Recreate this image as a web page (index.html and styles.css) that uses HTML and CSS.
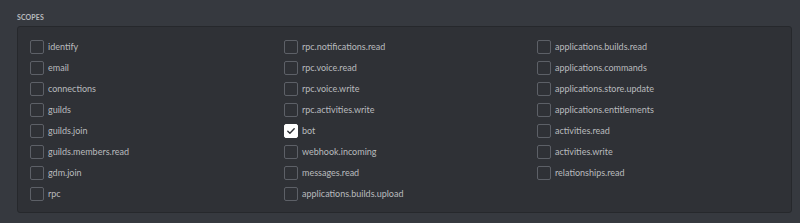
FILE: index.html
```html
<!DOCTYPE html>
<html>
<head>
<meta charset="utf-8">
<link rel="stylesheet" href="styles.css">
</head>
<body>
<div class="page">
  <div class="heading">Scopes</div>
  <div class="panel">
    <div class="col col-1">
      <label class="item"><span class="box"></span><span class="label">identify</span></label>
      <label class="item"><span class="box"></span><span class="label">email</span></label>
      <label class="item"><span class="box"></span><span class="label">connections</span></label>
      <label class="item"><span class="box"></span><span class="label">guilds</span></label>
      <label class="item"><span class="box"></span><span class="label">guilds.join</span></label>
      <label class="item"><span class="box"></span><span class="label">guilds.members.read</span></label>
      <label class="item"><span class="box"></span><span class="label">gdm.join</span></label>
      <label class="item"><span class="box"></span><span class="label">rpc</span></label>
    </div>
    <div class="col col-2">
      <label class="item"><span class="box"></span><span class="label">rpc.notifications.read</span></label>
      <label class="item"><span class="box"></span><span class="label">rpc.voice.read</span></label>
      <label class="item"><span class="box"></span><span class="label">rpc.voice.write</span></label>
      <label class="item"><span class="box"></span><span class="label">rpc.activities.write</span></label>
      <label class="item"><span class="box checked"><svg viewBox="0 0 14 14" width="14" height="14"><path d="M3.8 7.3 L5.9 9.3 L10.2 4.8" fill="none" stroke="#2f3136" stroke-width="1.4" stroke-linecap="round" stroke-linejoin="round"/></svg></span><span class="label">bot</span></label>
      <label class="item"><span class="box"></span><span class="label">webhook.incoming</span></label>
      <label class="item"><span class="box"></span><span class="label">messages.read</span></label>
      <label class="item"><span class="box"></span><span class="label">applications.builds.upload</span></label>
    </div>
    <div class="col col-3">
      <label class="item"><span class="box"></span><span class="label">applications.builds.read</span></label>
      <label class="item"><span class="box"></span><span class="label">applications.commands</span></label>
      <label class="item"><span class="box"></span><span class="label">applications.store.update</span></label>
      <label class="item"><span class="box"></span><span class="label">applications.entitlements</span></label>
      <label class="item"><span class="box"></span><span class="label">activities.read</span></label>
      <label class="item"><span class="box"></span><span class="label">activities.write</span></label>
      <label class="item"><span class="box"></span><span class="label">relationships.read</span></label>
    </div>
  </div>
</div>
</body>
</html>
```
FILE: styles.css
```css
html, body {
  margin: 0;
  padding: 0;
  background: #36393f;
}
body {
  font-family: Lato, "Liberation Sans", sans-serif;
  width: 800px;
  height: 223px;
  overflow: hidden;
}
.page {
  padding: 13px 8px 0 17px;
}
.heading {
  font-size: 7px;
  font-weight: 700;
  text-transform: uppercase;
  color: #b9bbbe;
  letter-spacing: 0.1px;
  line-height: 9px;
  height: 13px;
}
.panel {
  box-sizing: border-box;
  width: 775px;
  height: 187px;
  background: #2f3136;
  border: 1px solid #26282c;
  border-radius: 3px;
  display: grid;
  grid-template-columns: 254px 253px 1fr;
  padding: 13px 0 0 12px;
}
.col {
  display: flex;
  flex-direction: column;
  gap: 7px;
}
.item {
  display: flex;
  align-items: center;
  gap: 4px;
  height: 14px;
}
.box {
  box-sizing: border-box;
  width: 14px;
  height: 14px;
  border: 1px solid #5d6067;
  border-radius: 2px;
  flex: none;
  display: flex;
}
.box.checked {
  background: #ffffff;
  border-color: #ffffff;
}
.box svg {
  margin: -1px;
}
.label {
  font-size: 9px;
  color: #b9bbbe;
  line-height: 14px;
  white-space: nowrap;
}
```
